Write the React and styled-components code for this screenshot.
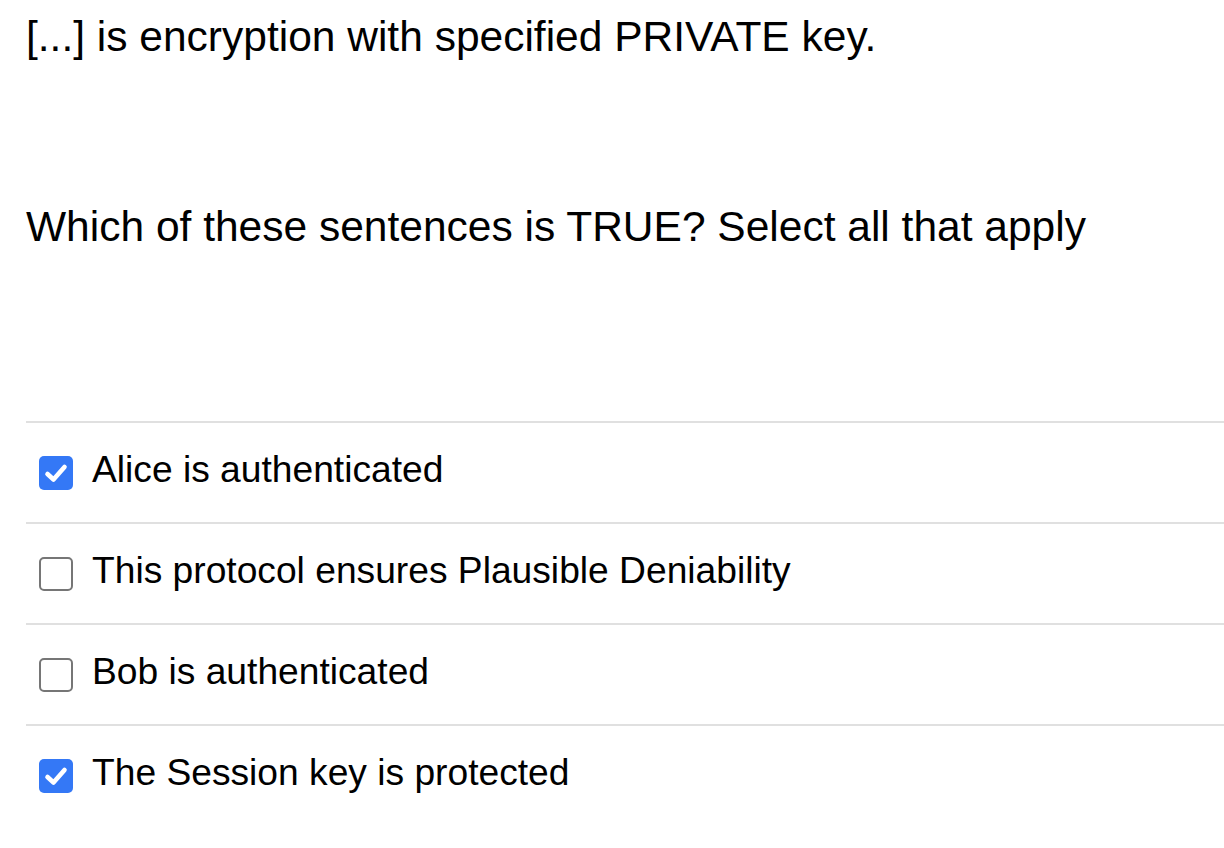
import { useState } from 'react';
import styled, { createGlobalStyle } from 'styled-components';

const GlobalStyle = createGlobalStyle`
  body {
    margin: 0;
    background: #ffffff;
    font-family: "Liberation Sans", Arial, sans-serif;
    color: #000000;
  }
`;

const Page = styled.div`
  padding: 12px 0 0 26px;
`;

const Heading = styled.h2`
  margin: 0;
  font-size: 42.5px;
  line-height: 50px;
  font-weight: normal;
`;

const Question = styled(Heading)`
  margin-top: 140px;
`;

const Options = styled.ul`
  list-style: none;
  margin: 169px 0 0;
  padding: 0;
`;

const Option = styled.li`
  display: flex;
  align-items: center;
  height: 99px;
  border-top: 2px solid #e0e0e0;
  padding-left: 13px;
  cursor: pointer;
`;

const Box = styled.span`
  flex: none;
  box-sizing: border-box;
  width: 34px;
  height: 34px;
  border-radius: 5px;
  display: flex;
  align-items: center;
  justify-content: center;
  background: ${(p) => (p.checked ? '#3478f6' : '#ffffff')};
  border: ${(p) => (p.checked ? 'none' : '2.5px solid #767676')};
`;

const Label = styled.span`
  margin-left: 19px;
  font-size: 37.2px;
  line-height: 44px;
  padding-bottom: 7px;
`;

const options = [
  { id: 1, text: 'Alice is authenticated', checked: true },
  { id: 2, text: 'This protocol ensures Plausible Deniability', checked: false },
  { id: 3, text: 'Bob is authenticated', checked: false },
  { id: 4, text: 'The Session key is protected', checked: true },
];

export default function App() {
  const [items, setItems] = useState(options);

  const toggle = (id) => {
    setItems(items.map((item) => (item.id === id ? { ...item, checked: !item.checked } : item)));
  };

  return (
    <Page>
      <GlobalStyle />
      <Heading>[...] is encryption with specified PRIVATE key.</Heading>
      <Question>Which of these sentences is TRUE? Select all that apply</Question>
      <Options>
        {items.map((item) => (
          <Option key={item.id} onClick={() => toggle(item.id)}>
            <Box checked={item.checked}>
              {item.checked && (
                <svg width="26" height="26" viewBox="0 0 26 26">
                  <path d="M4.5 14 L10.5 19.5 L21.5 7" fill="none" stroke="#ffffff" strokeWidth="4.6" strokeLinecap="round" strokeLinejoin="round" />
                </svg>
              )}
            </Box>
            <Label>{item.text}</Label>
          </Option>
        ))}
      </Options>
    </Page>
  );
}
